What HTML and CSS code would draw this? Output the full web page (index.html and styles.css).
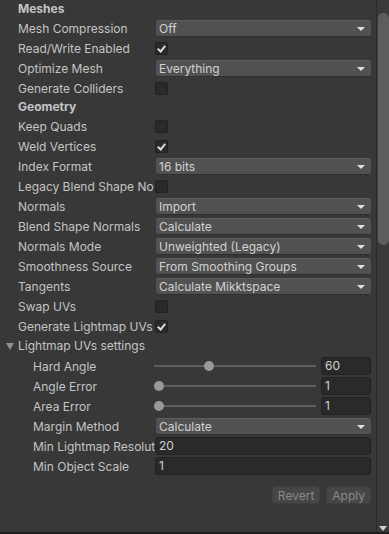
FILE: index.html
```html
<html>

<head>
  <title>Model Import Settings</title>
  <meta charset="UTF-8">
  <link rel="stylesheet" href="styles.css">
</head>

<body>
  <div id="app">
    <div id="dv_inspector">
      <div class="header">Meshes</div>
      <div class="row">
        <label>Mesh Compression</label>
        <div class="dropdown">Off</div>
      </div>
      <div class="row">
        <label>Read/Write Enabled</label>
        <div class="checkbox checked"></div>
      </div>
      <div class="row">
        <label>Optimize Mesh</label>
        <div class="dropdown">Everything</div>
      </div>
      <div class="row">
        <label>Generate Colliders</label>
        <div class="checkbox"></div>
      </div>

      <div class="header">Geometry</div>
      <div class="row">
        <label>Keep Quads</label>
        <div class="checkbox"></div>
      </div>
      <div class="row">
        <label>Weld Vertices</label>
        <div class="checkbox checked"></div>
      </div>
      <div class="row">
        <label>Index Format</label>
        <div class="dropdown">16 bits</div>
      </div>
      <div class="row">
        <label>Legacy Blend Shape No</label>
        <div class="checkbox"></div>
      </div>
      <div class="row">
        <label>Normals</label>
        <div class="dropdown">Import</div>
      </div>
      <div class="row">
        <label>Blend Shape Normals</label>
        <div class="dropdown">Calculate</div>
      </div>
      <div class="row">
        <label>Normals Mode</label>
        <div class="dropdown">Unweighted (Legacy)</div>
      </div>
      <div class="row">
        <label>Smoothness Source</label>
        <div class="dropdown">From Smoothing Groups</div>
      </div>
      <div class="row">
        <label>Tangents</label>
        <div class="dropdown">Calculate Mikktspace</div>
      </div>
      <div class="row">
        <label>Swap UVs</label>
        <div class="checkbox"></div>
      </div>
      <div class="row">
        <label>Generate Lightmap UVs</label>
        <div class="checkbox checked"></div>
      </div>

      <div class="foldout">Lightmap UVs settings</div>
      <div class="row indent">
        <label>Hard Angle</label>
        <div class="slider">
          <div class="track"><span class="thumb" style="left: 31%"></span></div>
          <div class="number">60</div>
        </div>
      </div>
      <div class="row indent">
        <label>Angle Error</label>
        <div class="slider">
          <div class="track"><span class="thumb" style="left: 0%"></span></div>
          <div class="number">1</div>
        </div>
      </div>
      <div class="row indent">
        <label>Area Error</label>
        <div class="slider">
          <div class="track"><span class="thumb" style="left: 0%"></span></div>
          <div class="number">1</div>
        </div>
      </div>
      <div class="row indent">
        <label>Margin Method</label>
        <div class="dropdown">Calculate</div>
      </div>
      <div class="row indent">
        <label>Min Lightmap Resolut</label>
        <div class="textfield">20</div>
      </div>
      <div class="row indent">
        <label>Min Object Scale</label>
        <div class="textfield">1</div>
      </div>

      <div class="btns">
        <button>Revert</button>
        <button>Apply</button>
      </div>
    </div>
    <div id="dv_scrollbar">
      <div class="thumb_bar"></div>
      <div class="arrow_down"></div>
    </div>
  </div>
</body>

</html>
```

FILE: styles.css
```css
body {
  font-family: Inter, "Noto Sans", sans-serif;
  background-color: #383838;
  color: #c4c4c4;
  font-size: 12px;
  margin: 0;
  padding: 0;
}

#app {
  display: flex;
  flex-direction: row;
  height: 532px;
  border-bottom: 2px solid #1e1e1e;
  overflow: hidden;
}

/** 检视面板 */
#dv_inspector {
  flex-grow: 1;
  padding: 0 5px 0 18px;
}

.header {
  height: 18px;
  line-height: 18px;
  font-weight: bold;
}

.row {
  display: grid;
  grid-template-columns: 137px 1fr;
  align-items: center;
  height: 20px;
}

.row label {
  white-space: nowrap;
}

.row.indent label {
  padding-left: 15px;
}

/* 折叠标题 */
.foldout {
  height: 20px;
  line-height: 20px;
  position: relative;
}

.foldout::before {
  content: "";
  position: absolute;
  left: -12px;
  top: 7px;
  border-left: 4px solid transparent;
  border-right: 4px solid transparent;
  border-top: 7px solid #8f8f8f;
}

/* 下拉框 */
.dropdown {
  height: 15px;
  line-height: 15px;
  margin-left: 1px;
  padding-left: 3px;
  background-color: #515151;
  border-top: 1px solid #5d5d5d;
  border-bottom: 1px solid #2f2f2f;
  border-radius: 3px;
  color: #d2d2d2;
  position: relative;
  white-space: nowrap;
}

.dropdown::after {
  content: "";
  position: absolute;
  right: 6px;
  top: 6px;
  border-left: 4px solid transparent;
  border-right: 4px solid transparent;
  border-top: 4px solid #e0e0e0;
}

/* 复选框 */
.checkbox {
  width: 11px;
  height: 11px;
  background-color: #2a2a2a;
  border: 1px solid #212121;
  border-radius: 2px;
  position: relative;
}

.checkbox.checked::after {
  content: "";
  position: absolute;
  left: 3px;
  top: 1px;
  width: 3px;
  height: 6px;
  border-right: 2px solid #dcdcdc;
  border-bottom: 2px solid #dcdcdc;
  transform: rotate(40deg);
}

/* 滑块 */
.slider {
  display: flex;
  align-items: center;
  gap: 5px;
  margin-left: -1px;
}

.track {
  flex-grow: 1;
  height: 2px;
  background-color: #5e5e5e;
  position: relative;
}

.track .thumb {
  position: absolute;
  top: -4px;
  width: 10px;
  height: 10px;
  border-radius: 50%;
  background-color: #999999;
}

.number,
.textfield {
  height: 16px;
  line-height: 16px;
  padding-left: 3px;
  background-color: #2a2a2a;
  border: 1px solid #212121;
  border-radius: 3px;
  color: #d2d2d2;
}

.number {
  width: 45px;
}

/* 底部按键 */
.btns {
  display: flex;
  justify-content: flex-end;
  gap: 6px;
  margin-top: 10px;
}

button {
  font-family: inherit;
  font-size: 12px;
  height: 18px;
  padding: 0 5px;
  color: #8a8a8a;
  background-color: #464646;
  border: 1px solid #3e3e3e;
  border-radius: 3px;
}

/* 滚动条 */
#dv_scrollbar {
  width: 12px;
  background-color: #3a3a3a;
  border-left: 1px solid #2c2c2c;
  position: relative;
}

.thumb_bar {
  margin: 13px 0 0 1px;
  height: 232px;
  background-color: #5d5d5d;
  border-radius: 5px;
}

.arrow_down {
  position: absolute;
  left: 2px;
  bottom: 1px;
  border-left: 4px solid transparent;
  border-right: 4px solid transparent;
  border-top: 5px solid #d0d0d0;
}
```
